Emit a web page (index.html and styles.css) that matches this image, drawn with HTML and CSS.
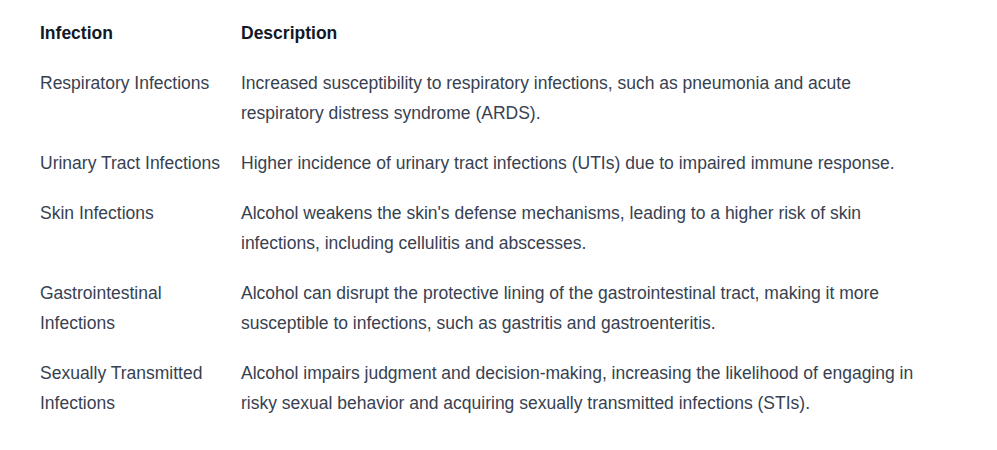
FILE: index.html
```html
<!DOCTYPE html>
<html lang="en">
<head>
<meta charset="utf-8">
<title>Infections</title>
<link rel="stylesheet" href="styles.css">
</head>
<body>
<table class="infections">
  <colgroup>
    <col class="col-name">
    <col class="col-desc">
  </colgroup>
  <thead>
    <tr><th>Infection</th><th>Description</th></tr>
  </thead>
  <tbody>
    <tr><td>Respiratory Infections</td><td>Increased susceptibility to respiratory infections, such as pneumonia and acute respiratory distress syndrome (ARDS).</td></tr>
    <tr><td>Urinary Tract Infections</td><td>Higher incidence of urinary tract infections (UTIs) due to impaired immune response.</td></tr>
    <tr><td>Skin Infections</td><td>Alcohol weakens the skin's defense mechanisms, leading to a higher risk of skin infections, including cellulitis and abscesses.</td></tr>
    <tr><td>Gastrointestinal Infections</td><td>Alcohol can disrupt the protective lining of the gastrointestinal tract, making it more susceptible to infections, such as gastritis and gastroenteritis.</td></tr>
    <tr><td>Sexually Transmitted Infections</td><td>Alcohol impairs judgment and decision-making, increasing the likelihood of engaging in risky sexual behavior and acquiring sexually transmitted infections (STIs).</td></tr>
  </tbody>
</table>
</body>
</html>
```

FILE: styles.css
```css
html, body {
  margin: 0;
  background: #ffffff;
}
body {
  padding: 8px 32px;
  font-family: "Liberation Sans", Arial, sans-serif;
  font-size: 17.5px;
  color: #374151;
}
.infections {
  border-collapse: collapse;
  table-layout: fixed;
  width: 897px;
}
.col-name { width: 201px; }
.col-desc { width: 696px; }
.infections th,
.infections td {
  padding: 10px 8px;
  line-height: 30px;
  text-align: left;
  vertical-align: top;
}
.infections th {
  font-weight: bold;
  color: #111827;
}
```
